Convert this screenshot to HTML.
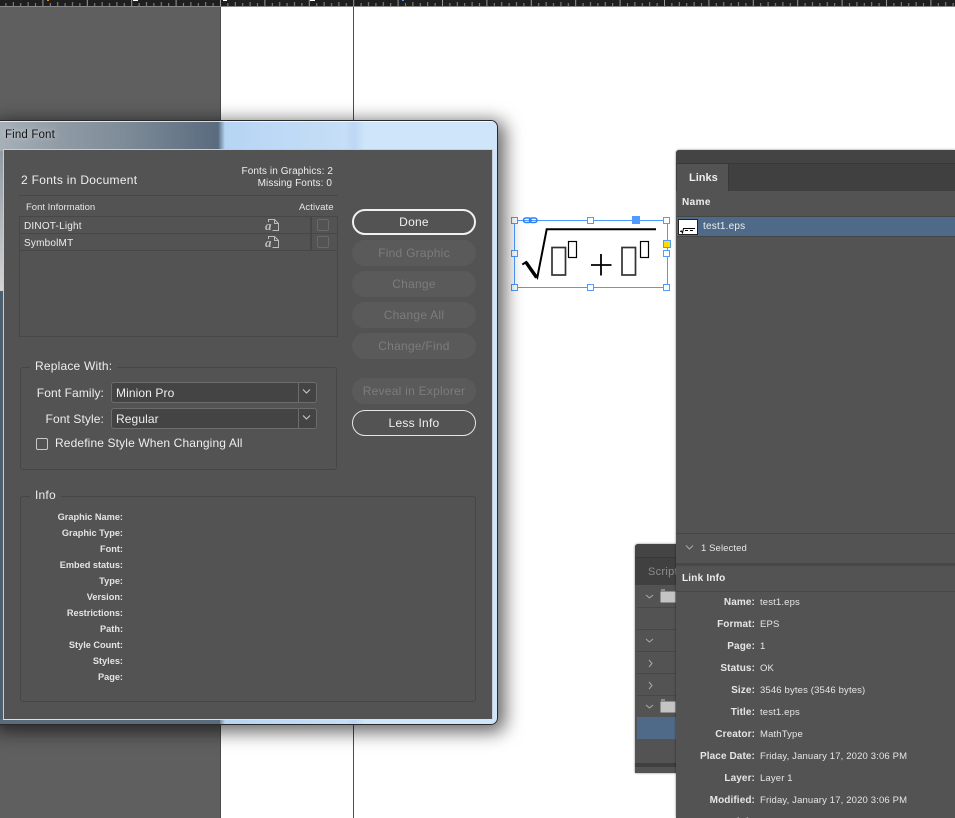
<!DOCTYPE html>
<html><head><meta charset="utf-8"><title>Find Font</title>
<style>
html,body{margin:0;padding:0;width:955px;height:818px;overflow:hidden;background:#fff}
body{position:relative;font-family:"Liberation Sans",sans-serif;color:#eee;font-size:11px}
div,span.a{position:absolute;box-sizing:border-box}
.t{position:absolute;white-space:nowrap;line-height:14px;height:14px}
.s12{font-size:12px;letter-spacing:.2px}
.lb{font-size:9.2px;font-weight:bold;text-align:right;color:#e4e4e4}
.btn{left:352px;width:124px;height:26px;border-radius:13px;background:#5a5a5a;color:#7c7c7c;font-size:12px;letter-spacing:.25px;text-align:center;line-height:26px}
.fs{border:1px solid #464646;border-radius:3px}
.leg{background:#535353;padding:0 5px;color:#eee;font-size:12px;letter-spacing:.2px;line-height:14px;height:14px;white-space:nowrap}
.sel{left:111px;width:206px;height:21px;background:#444;border:1px solid #6c6c6c;border-radius:3px;font-size:12px;letter-spacing:.1px;line-height:20px;padding-left:4px;color:#eee}
.sel i{position:absolute;left:186px;top:0;width:1px;height:19px;background:#6c6c6c}
.sel svg{position:absolute;left:190px;top:6px}
.h{width:7px;height:7px;background:#fff;border:1px solid #4f9bff}
.ln{height:1px;background:#474747}
.k{left:677px;width:78px;text-align:right;font-size:10px;font-weight:bold;letter-spacing:.1px;color:#e6e6e6;position:absolute;white-space:nowrap;line-height:14px;height:14px}
.v{left:760px;font-size:9.5px;letter-spacing:.15px;color:#e6e6e6;position:absolute;white-space:nowrap;line-height:14px;height:14px}
</style></head>
<body>
<!-- pasteboard -->
<div style="left:0;top:7px;width:220px;height:811px;background:#5f5f5f"></div>
<div style="left:220px;top:7px;width:1px;height:811px;background:#4a4a4a"></div>
<div style="left:353px;top:7px;width:1px;height:811px;background:#5b3a8a"></div>
<!-- ruler -->
<svg style="position:absolute;left:0;top:0" width="955" height="7">
<defs><pattern id="r" x="-2" y="0" width="44.4" height="6" patternUnits="userSpaceOnUse">
<rect x="0" y="0" width="1" height="6" fill="#9a9a9a"/>
<rect x="7.4" y="3" width="1" height="3" fill="#8a8a8a"/>
<rect x="14.8" y="2" width="1" height="4" fill="#8a8a8a"/>
<rect x="22.2" y="3" width="1" height="3" fill="#8a8a8a"/>
<rect x="29.6" y="2" width="1" height="4" fill="#8a8a8a"/>
<rect x="37" y="3" width="1" height="3" fill="#8a8a8a"/>
</pattern></defs>
<rect width="955" height="6" fill="#1f1f1f"/><rect width="955" height="6" fill="url(#r)"/>
<rect y="6" width="955" height="1" fill="#8a8a8a"/>
<rect x="47" width="2" height="1" fill="#e08a2c"/><rect x="133" width="5" height="1" fill="#fff"/>
<rect x="223" width="4" height="1" fill="#fff"/><rect x="310" width="5" height="1" fill="#fff"/><rect x="402" width="2" height="1" fill="#4f9bff"/>
</svg>

<!-- selected frame -->
<svg style="position:absolute;left:505px;top:205px" width="175" height="95" viewBox="505 205 175 95">
<path d="M522.3 264.600L526.200 262L537.300 277.500L546.700 229.300H656" fill="none" stroke="#000" stroke-width="2"/>
<path d="M526 262.300L536.600 277.500" fill="none" stroke="#000" stroke-width="3.400"/>
<rect x="552" y="247.500" width="13.500" height="27.500" fill="#fff" stroke="#333" stroke-width="1.700"/>
<rect x="568.500" y="241.500" width="8" height="16" fill="#fff" stroke="#000" stroke-width="1.200"/>
<path d="M591 265H611.500M601 254V275.500" stroke="#000" stroke-width="1.800"/>
<rect x="622" y="247.500" width="13.500" height="27.500" fill="#fff" stroke="#333" stroke-width="1.700"/>
<rect x="640.500" y="241.500" width="8" height="16" fill="#fff" stroke="#000" stroke-width="1.200"/>
<rect x="514.500" y="220.500" width="153" height="67" fill="none" stroke="#4f9bff" stroke-width="1"/>
<g fill="none" stroke="#2e82f0" stroke-width="1.600"><rect x="523.500" y="218" width="7.500" height="4.500" rx="2.200"/><rect x="529.500" y="218" width="7.500" height="4.500" rx="2.200"/></g>
</svg>
<div class="h" style="left:511px;top:217px"></div><div class="h" style="left:587px;top:217px"></div><div class="h" style="left:663px;top:217px"></div>
<div class="h" style="left:511px;top:250px"></div><div class="h" style="left:663px;top:250px"></div>
<div class="h" style="left:511px;top:284px"></div><div class="h" style="left:587px;top:284px"></div><div class="h" style="left:663px;top:284px"></div>
<div style="left:632px;top:216px;width:8px;height:8px;background:#4f9bff"></div>
<div style="left:663px;top:240px;width:8px;height:8px;background:#ffdd00;border:1px solid #4f9bff"></div>

<!-- script panel -->
<div style="left:635px;top:544px;width:60px;height:229px;background:#535353;box-shadow:0 0 2px rgba(0,0,0,.5);border-radius:3px 0 0 0;overflow:hidden">
 <div style="left:0;top:0;width:60px;height:13px;background:#444"></div>
 <div style="left:0;top:13px;width:60px;height:28px;background:#404040;border-top:1px solid #383838"></div>
 <div class="t" style="left:13px;top:21px;font-size:11px;color:#8c8c8c;letter-spacing:.3px">Script</div>
 <div class="ln" style="left:2px;top:63px;width:58px"></div><div class="ln" style="left:2px;top:85px;width:58px"></div>
 <div class="ln" style="left:2px;top:107px;width:58px"></div><div class="ln" style="left:2px;top:129px;width:58px"></div>
 <div class="ln" style="left:2px;top:151px;width:58px"></div>
 <div style="left:2px;top:173px;width:58px;height:22px;background:#4e6a88"></div>
 <div style="left:0;top:219px;width:60px;height:4px;background:#3f3f3f"></div>
 <svg style="position:absolute;left:0;top:0" width="60" height="180" fill="none" stroke="#aaa" stroke-width="1">
  <path d="M11 51L14.500 54L18 51M11 95L14.500 98L18 95M14 116L17 119.500L14 123M14 138L17 141.500L14 145M11 161L14.500 164L18 161"/>
  <path d="M26 48V58H40V48ZM26 46H30M26 158V168H40V158ZM26 156H30" fill="#c4c4c4" stroke="#c4c4c4"/>
 </svg>
</div>

<!-- links panel -->
<div style="left:676px;top:150px;width:279px;height:668px;background:#535353;border-radius:3px 0 0 0;overflow:hidden;box-shadow:0 0 2px rgba(0,0,0,.5)">
 <div style="left:0;top:0;width:279px;height:13px;background:#444"></div>
 <div style="left:0;top:13px;width:279px;height:28px;background:#404040;border-top:1px solid #383838"></div>
 <div style="left:1px;top:14px;width:52px;height:27px;background:#535353;border-right:1px solid #383838"></div>
 <div class="t" style="left:13px;top:21px;font-size:11px;font-weight:bold;color:#eee">Links</div>
 <div class="t" style="left:6px;top:46px;font-size:10px;font-weight:bold;letter-spacing:.4px;color:#eee">Name</div>
 <div style="left:1px;top:66px;width:278px;height:21px;background:#4e6a88;border-top:1px solid #454545;border-bottom:1px solid #454545"></div>
 <div style="left:2px;top:69px;width:20px;height:16px;background:#fff;border:1px solid #222"></div>
 <svg style="position:absolute;left:3px;top:70px" width="18" height="14" fill="none" stroke="#000" stroke-width="1"><path d="M1 11.500L2.500 11L3.500 13L4.500 8.500H16M6 10.500H9M11 10.500H14"/></svg>
 <div class="t" style="left:27px;top:70px;font-size:10px;letter-spacing:.2px;color:#eee">test1.eps</div>
 <div style="left:0;top:383px;width:279px;height:1px;background:#464646"></div>
 <svg style="position:absolute;left:9px;top:395px" width="10" height="6" fill="none" stroke="#aaa"><path d="M1 .5L4.500 4L8 .5"/></svg>
 <div class="t" style="left:25px;top:392px;font-size:9.500px;letter-spacing:.1px;color:#e6e6e6">1 Selected</div>
 <div style="left:0;top:413px;width:279px;height:3px;background:#484848"></div>
 <div class="t" style="left:6px;top:422px;font-size:10px;font-weight:bold;letter-spacing:.2px;color:#eee">Link Info</div>
 <div style="left:0;top:441px;width:279px;height:1px;background:#474747"></div>
</div>
<div class="k" style="top:596px">Name:</div><div class="v" style="top:596px">test1.eps</div>
<div class="k" style="top:618px">Format:</div><div class="v" style="top:618px">EPS</div>
<div class="k" style="top:640px">Page:</div><div class="v" style="top:640px">1</div>
<div class="k" style="top:662px">Status:</div><div class="v" style="top:662px">OK</div>
<div class="k" style="top:684px">Size:</div><div class="v" style="top:684px">3546 bytes (3546 bytes)</div>
<div class="k" style="top:706px">Title:</div><div class="v" style="top:706px">test1.eps</div>
<div class="k" style="top:728px">Creator:</div><div class="v" style="top:728px">MathType</div>
<div class="k" style="top:750px">Place Date:</div><div class="v" style="top:750px">Friday, January 17, 2020 3:06 PM</div>
<div class="k" style="top:772px">Layer:</div><div class="v" style="top:772px">Layer 1</div>
<div class="k" style="top:794px">Modified:</div><div class="v" style="top:794px">Friday, January 17, 2020 3:06 PM</div>
<div class="k" style="top:816px">Link:</div><div class="v" style="top:816px">test1.eps</div>

<!-- dialog -->
<div style="left:-8px;top:120px;width:506px;height:605px;border-radius:7px;box-shadow:4px 4px 18px 3px rgba(0,0,0,.6);background:linear-gradient(90deg,#aab2b9 0,#8f9aa4 70px,#7e8c99 130px,#5a6b7e 225px,#b6d5f4 232px,#c6def7 352px,#bcd7f5 361px,#cfe5fa 372px,#cfe5fa 100%);border:1px solid #2a2a2a;overflow:hidden">
 <div style="left:0;top:0;right:0;height:1px;background:rgba(255,255,255,.75)"></div>
 <div style="left:0;top:30px;width:10px;height:140px;background:linear-gradient(#8f9aa4,#d4d4d4)"></div>
 <div style="left:0;top:170px;width:10px;height:434px;background:#4f5f72"></div>
 <div style="left:0;top:598px;width:227px;height:6px;background:#5a6b7e"></div>
 <div style="left:10px;top:28px;width:490px;height:571px;background:#535353;border:1px solid #c4cdd8;border-bottom-color:#d5e2f0"></div>
</div>
<div class="t" style="left:5px;top:128px;font-size:11.500px;color:#141414;letter-spacing:.15px;text-shadow:0 0 6px rgba(255,255,255,.7)">Find Font</div>

<div class="t" style="left:21px;top:173px;font-size:12px;letter-spacing:.3px;color:#f0f0f0">2 Fonts in Document</div>
<div class="t" style="right:622px;top:165px;font-size:10px;letter-spacing:.1px;color:#eee">Fonts in Graphics: 2</div>
<div class="t" style="right:623px;top:177px;font-size:10px;letter-spacing:.1px;color:#eee">Missing Fonts: 0</div>
<div class="ln" style="left:19px;top:195px;width:319px"></div>
<div class="t" style="left:26px;top:201px;font-size:9.500px;color:#e6e6e6">Font Information</div>
<div class="t" style="left:299px;top:201px;font-size:9.500px;letter-spacing:.1px;color:#e6e6e6">Activate</div>
<div style="left:19px;top:216px;width:319px;height:121px;border:1px solid #474747"></div>
<div class="ln" style="left:19px;top:233px;width:319px"></div>
<div class="ln" style="left:19px;top:250px;width:319px"></div>
<div style="left:310px;top:217px;width:2px;height:33px;background:#474747"></div>
<div class="t" style="left:24px;top:220px;font-size:10px;letter-spacing:.2px;color:#eee">DINOT-Light</div>
<div class="t" style="left:24px;top:237px;font-size:10px;letter-spacing:.2px;color:#eee">SymbolMT</div>
<svg style="position:absolute;left:264px;top:218px" width="18" height="32" fill="none" stroke="#bbb" stroke-width="1">
 <path d="M4.500 4V1.500H10.500L14.500 5.500V12.500H8.500M10.500 1.500V5.500H14.500"/>
 <path d="M4.500 21V18.500H10.500L14.500 22.500V29.500H8.500M10.500 18.500V22.500H14.500"/>
 <text x="1" y="12" font-family="Liberation Serif" font-style="italic" font-weight="bold" font-size="13" fill="#bbb" stroke="none">a</text>
 <text x="1" y="29" font-family="Liberation Serif" font-style="italic" font-weight="bold" font-size="13" fill="#bbb" stroke="none">a</text>
</svg>
<div style="left:317px;top:219px;width:12px;height:12px;border:1px solid #6a6a6a;border-radius:2px"></div>
<div style="left:317px;top:236px;width:12px;height:12px;border:1px solid #6a6a6a;border-radius:2px"></div>

<div class="btn" style="top:209px;background:#535353;border:2px solid #f0f0f0;color:#f0f0f0;line-height:22px">Done</div>
<div class="btn" style="top:240px">Find Graphic</div>
<div class="btn" style="top:271px">Change</div>
<div class="btn" style="top:302px">Change All</div>
<div class="btn" style="top:333px">Change/Find</div>
<div class="btn" style="top:378px">Reveal in Explorer</div>
<div class="btn" style="top:410px;background:#535353;border:1px solid #e6e6e6;color:#f0f0f0;line-height:24px">Less Info</div>

<div class="fs" style="left:20px;top:367px;width:317px;height:103px"></div>
<div class="leg" style="left:30px;top:359px">Replace With:</div>
<div class="t" style="right:851px;top:386px;font-size:12px;letter-spacing:.1px">Font Family:</div>
<div class="t" style="right:851px;top:412px;font-size:12px;letter-spacing:.1px">Font Style:</div>
<div class="sel" style="top:382px">Minion Pro<i></i><svg width="10" height="6" fill="none" stroke="#ccc"><path d="M1 .5L4.500 4L8 .5"/></svg></div>
<div class="sel" style="top:408px">Regular<i></i><svg width="10" height="6" fill="none" stroke="#ccc"><path d="M1 .5L4.500 4L8 .5"/></svg></div>
<div style="left:36px;top:438px;width:12px;height:12px;border:1px solid #c8c8c8;border-radius:2px"></div>
<div class="t" style="left:55px;top:436px;font-size:12px;letter-spacing:.13px">Redefine Style When Changing All</div>

<div class="fs" style="left:20px;top:496px;width:456px;height:206px"></div>
<div class="leg" style="left:30px;top:488px">Info</div>
<div class="t lb" style="right:832px;top:510px">Graphic Name:</div>
<div class="t lb" style="right:832px;top:526px">Graphic Type:</div>
<div class="t lb" style="right:832px;top:542px">Font:</div>
<div class="t lb" style="right:832px;top:558px">Embed status:</div>
<div class="t lb" style="right:832px;top:574px">Type:</div>
<div class="t lb" style="right:832px;top:590px">Version:</div>
<div class="t lb" style="right:832px;top:606px">Restrictions:</div>
<div class="t lb" style="right:832px;top:622px">Path:</div>
<div class="t lb" style="right:832px;top:638px">Style Count:</div>
<div class="t lb" style="right:832px;top:654px">Styles:</div>
<div class="t lb" style="right:832px;top:670px">Page:</div>
</body></html>
